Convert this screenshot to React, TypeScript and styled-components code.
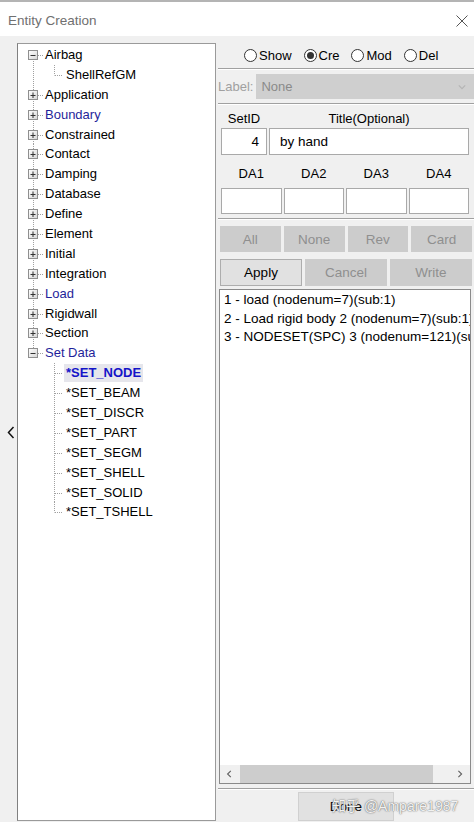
import React from 'react'
import styled, { createGlobalStyle } from 'styled-components';

type TreeNode = {
    label: string;
    blue?: boolean;
    selected?: boolean;
    children?: TreeNode[];
}

const tree: TreeNode[] = [
    { label: 'Airbag', children: [{ label: 'ShellRefGM' }] },
    { label: 'Application' },
    { label: 'Boundary', blue: true },
    { label: 'Constrained' },
    { label: 'Contact' },
    { label: 'Damping' },
    { label: 'Database' },
    { label: 'Define' },
    { label: 'Element' },
    { label: 'Initial' },
    { label: 'Integration' },
    { label: 'Load', blue: true },
    { label: 'Rigidwall' },
    { label: 'Section' },
    {
        label: 'Set Data', blue: true, children: [
            { label: '*SET_NODE', selected: true },
            { label: '*SET_BEAM' },
            { label: '*SET_DISCR' },
            { label: '*SET_PART' },
            { label: '*SET_SEGM' },
            { label: '*SET_SHELL' },
            { label: '*SET_SOLID' },
            { label: '*SET_TSHELL' },
        ]
    },
]

const listItems = [
    '1 - load (nodenum=7)(sub:1)',
    '2 - Load rigid body 2 (nodenum=7)(sub:1)',
    '3 - NODESET(SPC) 3 (nodenum=121)(sub:1)',
]

const DOT = '#a0a0a0';

const RootGutter: React.FC<{ first: boolean; last: boolean; expanded: boolean }> = ({ first, last, expanded }) => (
    <svg width="25" height="20" style={{ flexShrink: 0 }}>
        <line x1="15.5" y1={first ? 10 : 0} x2="15.5" y2={last ? 10 : 20} stroke={DOT} strokeDasharray="1 1" />
        <line x1="20" y1="10.5" x2="25" y2="10.5" stroke={DOT} strokeDasharray="1 1" />
        <defs>
            <linearGradient id="boxfill" x1="0" y1="0" x2="1" y2="1">
                <stop offset="0" stopColor="#ffffff" />
                <stop offset="1" stopColor="#d6d6d6" />
            </linearGradient>
        </defs>
        <rect x="10.5" y="5.5" width="9" height="9" fill="url(#boxfill)" stroke="#8f8f8f" />
        <line x1="12.5" y1="10.5" x2="17.5" y2="10.5" stroke="#333" />
        {!expanded && <line x1="15" y1="7.5" x2="15" y2="13" stroke="#333" />}
    </svg>
)

const ChildGutter: React.FC<{ parentLast: boolean; last: boolean }> = ({ parentLast, last }) => (
    <svg width="46" height="20" style={{ flexShrink: 0 }}>
        {!parentLast && <line x1="15.5" y1="0" x2="15.5" y2="20" stroke={DOT} strokeDasharray="1 1" />}
        <line x1="36.5" y1="0" x2="36.5" y2={last ? 10.5 : 20} stroke={DOT} strokeDasharray="1 1" />
        <line x1="37" y1="10.5" x2="45" y2="10.5" stroke={DOT} strokeDasharray="1 1" />
    </svg>
)

const Chevron: React.FC<{ dir: 'left' | 'right' | 'down'; size?: number; color?: string }> = ({ dir, size = 8, color = '#222' }) => {
    const pts = dir === 'left' ? '6,1 2,5 6,9' : dir === 'right' ? '3,1 7,5 3,9' : '1,3 5,7 9,3';
    return (
        <svg width={size} height={size} viewBox="0 0 10 10">
            <polyline points={pts} fill="none" stroke={color} strokeWidth="1.4" />
        </svg>
    )
}

const Radio: React.FC<{ label: string; checked?: boolean }> = ({ label, checked }) => (
    <RadioItem>
        <svg width="13" height="13" viewBox="0 0 13 13">
            <circle cx="6.5" cy="6.5" r="6" fill="#fff" stroke="#333" />
            {checked && <circle cx="6.5" cy="6.5" r="3.5" fill="#333" />}
        </svg>
        <span>{label}</span>
    </RadioItem>
)

const App: React.FC = () => {
    return (
        <Window>
            <GlobalStyle />
            <TitleBar>
                <TitleText>Entity Creation</TitleText>
                <svg width="12" height="12" viewBox="0 0 12 12">
                    <line x1="0.5" y1="0.5" x2="11.5" y2="11.5" stroke="#555" />
                    <line x1="11.5" y1="0.5" x2="0.5" y2="11.5" stroke="#555" />
                </svg>
            </TitleBar>
            <Body>
                <LeftStrip>
                    <svg width="8" height="13" viewBox="0 0 8 13">
                        <polyline points="6.5,1 1.5,6.5 6.5,12" fill="none" stroke="#111" strokeWidth="1.5" />
                    </svg>
                </LeftStrip>
                <TreeBox>
                    {tree.map((node, i) => {
                        const last = i === tree.length - 1;
                        return (
                            <React.Fragment key={node.label}>
                                <TreeRow>
                                    <RootGutter first={i === 0} last={last} expanded={!!node.children} />
                                    <TreeLabel $blue={node.blue}>{node.label}</TreeLabel>
                                </TreeRow>
                                {node.children?.map((child, j) => (
                                    <TreeRow key={child.label}>
                                        <ChildGutter parentLast={last} last={j === node.children!.length - 1} />
                                        <TreeLabel $selected={child.selected}>{child.label}</TreeLabel>
                                    </TreeRow>
                                ))}
                            </React.Fragment>
                        )
                    })}
                </TreeBox>
                <RightPanel>
                    <RadioRow>
                        <Radio label="Show" />
                        <Radio label="Cre" checked />
                        <Radio label="Mod" />
                        <Radio label="Del" />
                    </RadioRow>
                    <Separator />
                    <LabelRow>
                        <DimText>Label:</DimText>
                        <Combo>
                            <span>None</span>
                            <Chevron dir="down" size={8} color="#b4b4b4" />
                        </Combo>
                    </LabelRow>
                    <Separator />
                    <FieldGrid $cols="46px 1fr">
                        <FieldLabel>SetID</FieldLabel>
                        <FieldLabel>Title(Optional)</FieldLabel>
                        <TextBox $align="right" $height={27}>4</TextBox>
                        <TextBox $height={27}>by hand</TextBox>
                    </FieldGrid>
                    <FieldGrid $cols="repeat(4, 1fr)" $labelHeight={33}>
                        <FieldLabel>DA1</FieldLabel>
                        <FieldLabel>DA2</FieldLabel>
                        <FieldLabel>DA3</FieldLabel>
                        <FieldLabel>DA4</FieldLabel>
                        <TextBox $height={26} />
                        <TextBox $height={26} />
                        <TextBox $height={26} />
                        <TextBox $height={26} />
                    </FieldGrid>
                    <Separator $top={4} />
                    <ButtonRow $cols={4} $top={6} $height={26}>
                        <Button disabled>All</Button>
                        <Button disabled>None</Button>
                        <Button disabled>Rev</Button>
                        <Button disabled>Card</Button>
                    </ButtonRow>
                    <ButtonRow $cols={3} $top={7} $height={27}>
                        <Button>Apply</Button>
                        <Button disabled>Cancel</Button>
                        <Button disabled>Write</Button>
                    </ButtonRow>
                    <ListBox>
                        <ListContent>
                            {listItems.map(item => <ListItem key={item}>{item}</ListItem>)}
                        </ListContent>
                        <HScroll>
                            <ScrollArrow><Chevron dir="left" size={8} color="#606060" /></ScrollArrow>
                            <ScrollTrack>
                                <ScrollThumb />
                            </ScrollTrack>
                            <ScrollArrow><Chevron dir="right" size={8} color="#606060" /></ScrollArrow>
                        </HScroll>
                    </ListBox>
                    <Separator $top={4} />
                    <Footer>
                        <DoneButton>Done</DoneButton>
                        <Watermark>知乎 @Ampare1987</Watermark>
                    </Footer>
                </RightPanel>
            </Body>
        </Window>
    )
}

export default App;


const GlobalStyle = createGlobalStyle`
  html, body {
    margin: 0;
    padding: 0;
    background: #f0f0f0;
    overflow: hidden;
  }
  * {
    box-sizing: border-box;
  }
`;

const Window = styled.div`
  width: 474px;
  height: 822px;
  display: flex;
  flex-direction: column;
  background: #f0f0f0;
  font-family: "Liberation Sans", Arial, sans-serif;
  color: #000;
`;

const TitleBar = styled.div`
  height: 36px;
  flex-shrink: 0;
  background: #fff;
  border-top: 2px solid #b4b4b4;
  display: flex;
  align-items: center;
  justify-content: space-between;
  padding: 3px 6px 0 8px;
`;

const TitleText = styled.div`
  font-size: 13.5px;
  color: #707070;
`;

const Body = styled.div`
  flex: 1;
  display: flex;
  min-height: 0;
`;

const LeftStrip = styled.div`
  width: 17px;
  flex-shrink: 0;
  display: flex;
  align-items: center;
  justify-content: flex-start;
  padding: 6px 0 0 7px;
`;

const TreeBox = styled.div`
  width: 199px;
  flex-shrink: 0;
  margin: 7px 0 1px;
  padding-top: 1px;
  background: #fff;
  border: 1px solid #9a9a9a;
  border-left-color: #808080;
  overflow: hidden;
`;

const TreeRow = styled.div`
  height: 19.9px;
  display: flex;
  align-items: center;
  font-size: 13px;
  white-space: nowrap;
`;

const TreeLabel = styled.span<{ $blue?: boolean; $selected?: boolean }>`
  padding: 1px 2px;
  line-height: 16px;
  color: ${p => p.$selected ? '#1414c8' : p.$blue ? '#1f1f9a' : '#000'};
  font-weight: ${p => p.$selected ? 700 : 400};
  background: ${p => p.$selected ? '#e6e6ec' : 'transparent'};
`;

const RightPanel = styled.div`
  flex: 1;
  margin-left: 2px;
  display: flex;
  flex-direction: column;
  min-width: 0;
  font-size: 13px;
`;

const RadioRow = styled.div`
  height: 32px;
  padding: 6px 0 0 26px;
  display: flex;
  align-items: center;
  gap: 12px;
`;

const RadioItem = styled.label`
  display: flex;
  align-items: center;
  gap: 2px;
  font-size: 13px;
`;

const Separator = styled.div<{ $top?: number }>`
  height: 2px;
  flex-shrink: 0;
  margin-top: ${p => p.$top ?? 0}px;
  border-top: 1px solid #a0a0a0;
  background: #fff;
`;

const LabelRow = styled.div`
  display: flex;
  align-items: center;
  padding: 4px 0 4px 0;
  gap: 3px;
`;

const DimText = styled.span`
  color: #a0a0a0;
  font-size: 13px;
`;

const Combo = styled.div`
  flex: 1;
  height: 25px;
  background: #cfcfcf;
  color: #8a8a8a;
  display: flex;
  align-items: center;
  justify-content: space-between;
  padding: 0 8px 0 5px;
`;

const FieldGrid = styled.div<{ $cols: string; $labelHeight?: number }>`
  display: grid;
  grid-template-columns: ${p => p.$cols};
  grid-template-rows: ${p => p.$labelHeight ?? 23}px auto;
  column-gap: 2px;
  padding: 0 5px 0 3px;
`;

const FieldLabel = styled.div`
  display: flex;
  align-items: center;
  justify-content: center;
  padding-top: 3px;
  font-size: 13px;
`;

const TextBox = styled.div<{ $align?: 'left' | 'right'; $height: number }>`
  height: ${p => p.$height}px;
  background: #fff;
  border: 1px solid #a9a9a9;
  display: flex;
  align-items: center;
  justify-content: ${p => p.$align === 'right' ? 'flex-end' : 'flex-start'};
  padding: ${p => p.$align === 'right' ? '0 7px 0 0' : '0 0 0 10px'};
  font-size: 13.5px;
`;

const ButtonRow = styled.div<{ $cols: number; $top: number; $height: number }>`
  display: grid;
  grid-template-columns: repeat(${p => p.$cols}, 1fr);
  gap: 3px;
  margin-top: ${p => p.$top}px;
  height: ${p => p.$height}px;
  padding: 0 2px;
`;

const Button = styled.button`
  font-family: inherit;
  font-size: 13.5px;
  color: #000;
  background: #e1e1e1;
  border: 1px solid #adadad;
  padding: 0;
  margin: 0;

  &:disabled {
    background: #cccccc;
    border-color: #cccccc;
    color: #8f8f8f;
  }
`;

const ListBox = styled.div`
  flex: 1;
  min-height: 0;
  margin: 3px 3px 0 1px;
  background: #fff;
  border: 1px solid #8a8a8a;
  display: flex;
  flex-direction: column;
`;

const ListContent = styled.div`
  flex: 1;
  overflow: hidden;
  padding: 1px 0 0 4px;
`;

const ListItem = styled.div`
  white-space: nowrap;
  font-size: 13.5px;
  line-height: 18.5px;
`;

const HScroll = styled.div`
  height: 18px;
  flex-shrink: 0;
  display: flex;
  background: #f0f0f0;
`;

const ScrollArrow = styled.div`
  width: 20px;
  display: flex;
  align-items: center;
  justify-content: center;
`;

const ScrollTrack = styled.div`
  flex: 1;
  display: flex;
`;

const ScrollThumb = styled.div`
  width: 193px;
  background: #cdcdcd;
`;

const Footer = styled.div`
  position: relative;
  height: 32px;
  flex-shrink: 0;
  display: flex;
  align-items: flex-end;
  padding: 0 0 1px 80px;
`;

const DoneButton = styled.button`
  width: 96px;
  height: 29px;
  font-family: inherit;
  font-size: 13.5px;
  color: #000;
  background: #e1e1e1;
  border: 1px solid #d0d0d0;
  padding: 0;
`;

const Watermark = styled.div`
  position: absolute;
  left: 114px;
  top: 5px;
  font-family: "Liberation Sans", "Noto Sans CJK SC", sans-serif;
  font-size: 14px;
  color: rgba(255, 255, 255, 0.92);
  text-shadow: 0 0 1px #666, 0 0 2px #888;
  white-space: nowrap;
  pointer-events: none;
`;
